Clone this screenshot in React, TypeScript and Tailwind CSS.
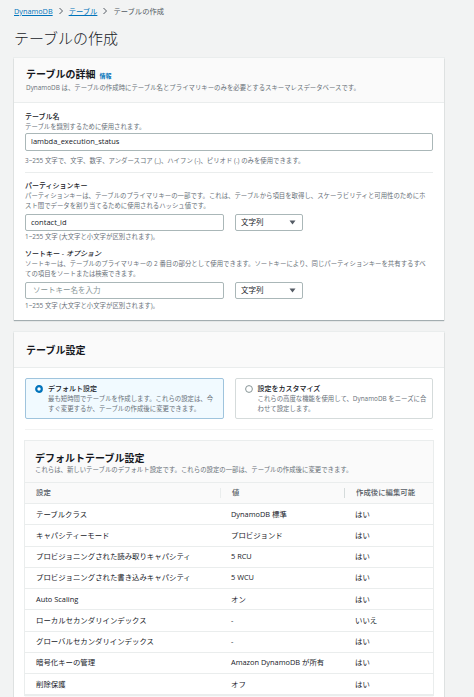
import React from 'react';

const FONT = "[font-family:'Open_Sans','Noto_Sans_CJK_JP',sans-serif]";

function Chevron() {
  return (
    <svg width="8" height="8" viewBox="0 0 8 8" className="mx-[4px]">
      <path d="M2.5 1 L5.5 4 L2.5 7" fill="none" stroke="#545b64" strokeWidth="1" />
    </svg>
  );
}

function Caret() {
  return (
    <svg width="7" height="5" viewBox="0 0 7 5">
      <path d="M0.5 0.5 L6.5 0.5 L3.5 4.5 Z" fill="#545b64" />
    </svg>
  );
}

function Select() {
  return (
    <div className="w-[68px] h-full border border-[#aab7b8] rounded-[2px] bg-white flex items-center justify-between pl-[5px] pr-[6px] text-[7.5px] text-[#16191f]">
      <span>文字列</span>
      <Caret />
    </div>
  );
}

const rows: [string, string, string][] = [
  ['テーブルクラス', 'DynamoDB 標準', 'はい'],
  ['キャパシティーモード', 'プロビジョンド', 'はい'],
  ['プロビジョニングされた読み取りキャパシティ', '5 RCU', 'はい'],
  ['プロビジョニングされた書き込みキャパシティ', '5 WCU', 'はい'],
  ['Auto Scaling', 'オン', 'はい'],
  ['ローカルセカンダリインデックス', '-', 'いいえ'],
  ['グローバルセカンダリインデックス', '-', 'はい'],
  ['暗号化キーの管理', 'Amazon DynamoDB が所有', 'はい'],
  ['削除保護', 'オフ', 'はい'],
];

export default function App() {
  return (
    <div className={`${FONT} min-h-[697px] bg-[#f2f3f3] text-[#16191f] pl-[14px] pr-[30px]`}>
      {/* breadcrumb */}
      <div className="h-[21px] flex items-center text-[7.3px] pt-[1px]">
        <span className="text-[#0073bb] underline">DynamoDB</span>
        <Chevron />
        <span className="text-[#0073bb] underline">テーブル</span>
        <Chevron />
        <span className="text-[#545b64]">テーブルの作成</span>
      </div>
      <h1 className="h-[37px] flex items-center text-[15px] font-light pb-[2px]">テーブルの作成</h1>

      {/* card: table details */}
      <div className="bg-white shadow-[0_1px_1px_rgba(0,28,36,0.3),0_0_0_1px_#eaeded]">
        <div className="bg-[#fafafa] border-b border-[#eaeded] px-[12px] pt-[9px] pb-[9px]">
          <div className="flex items-baseline gap-[4px] leading-[14px]">
            <span className="text-[10px] font-bold">テーブルの詳細</span>
            <span className="text-[6px] font-bold text-[#0073bb]">情報</span>
          </div>
          <p className="text-[6.4px] leading-[10px] text-[#687078]">DynamoDB は、テーブルの作成時にテーブル名とプライマリキーのみを必要とするスキーマレスデータベースです。</p>
        </div>
        <div className="px-[11px] pt-[9px] pb-[9px]">
          <div className="text-[7px] font-medium leading-[10px]">テーブル名</div>
          <div className="text-[6.4px] leading-[10px] text-[#687078]">テーブルを識別するために使用されます。</div>
          <div className="mt-[1px] h-[18px] border border-[#aab7b8] rounded-[2px] flex items-center pl-[5px] text-[7.5px] font-medium">lambda_execution_status</div>
          <div className="mt-[5px] text-[6.4px] leading-[10px] text-[#687078]">3~255 文字で、文字、数字、アンダースコア (_)、ハイフン (-)、ピリオド (.) のみを使用できます。</div>
          <div className="mt-[6px] h-px bg-[#eaeded]" />

          <div className="mt-[8px] text-[7px] font-medium leading-[10px]">パーティションキー</div>
          <div className="text-[6.4px] leading-[10px] text-[#687078] whitespace-nowrap">
            <div>パーティションキーは、テーブルのプライマリキーの一部です。これは、テーブルから項目を取得し、スケーラビリティと可用性のためにホ</div>
            <div>スト間でデータを割り当てるために使用されるハッシュ値です。</div>
          </div>
          <div className="mt-[3px] h-[17px] flex gap-[11px]">
            <div className="w-[199px] h-full border border-[#aab7b8] rounded-[2px] flex items-center pl-[5px] text-[7.5px] font-medium">contact_id</div>
            <Select />
          </div>
          <div className="mt-[1px] text-[6.4px] leading-[10px] text-[#687078]">1~255 文字 (大文字と小文字が区別されます)。</div>

          <div className="mt-[7px] text-[7px] font-medium leading-[10px]">ソートキー - <i>オプション</i></div>
          <div className="text-[6.4px] leading-[10px] text-[#687078] whitespace-nowrap">
            <div>ソートキーは、テーブルのプライマリキーの 2 番目の部分として使用できます。ソートキーにより、同じパーティションキーを共有するすべ</div>
            <div>ての項目をソートまたは検索できます。</div>
          </div>
          <div className="mt-[3px] h-[17px] flex gap-[11px]">
            <div className="w-[199px] h-full border border-[#aab7b8] rounded-[2px] flex items-center pl-[7px] text-[7.5px] text-[#879596]">ソートキー名を入力</div>
            <Select />
          </div>
          <div className="mt-[2px] text-[6.4px] leading-[10px] text-[#687078]">1~255 文字 (大文字と小文字が区別されます)。</div>
        </div>
      </div>

      {/* card: table settings */}
      <div className="mt-[12px] bg-white shadow-[0_1px_1px_rgba(0,28,36,0.3),0_0_0_1px_#eaeded]">
        <div className="bg-[#fafafa] border-b border-[#eaeded] px-[12px] pt-[9px] pb-[10px] leading-[14px]">
          <span className="text-[10px] font-bold">テーブル設定</span>
        </div>
        <div className="px-[11px] pt-[10px]">
          <div className="flex gap-[11px]">
            <div className="flex-1 h-[41px] border border-[#9fc4dd] bg-[#f1faff] rounded-[2px] flex pl-[9px] pt-[5px] gap-[5px]">
              <svg width="8" height="8" viewBox="0 0 8 8" className="mt-[1px] shrink-0">
                <circle cx="4" cy="4" r="2.8" fill="#fff" stroke="#0073bb" strokeWidth="2.2" />
              </svg>
              <div>
                <div className="text-[7px] font-medium leading-[10px]">デフォルト設定</div>
                <div className="text-[6.4px] leading-[10px] text-[#687078] whitespace-nowrap">
                  <div>最も短時間でテーブルを作成します。これらの設定は、今</div>
                  <div>すぐ変更するか、テーブルの作成後に変更できます。</div>
                </div>
              </div>
            </div>
            <div className="flex-1 h-[41px] border border-[#d5dbdb] bg-white rounded-[2px] flex pl-[9px] pt-[5px] gap-[5px]">
              <svg width="8" height="8" viewBox="0 0 8 8" className="mt-[1px] shrink-0">
                <circle cx="4" cy="4" r="3.4" fill="#fff" stroke="#879596" strokeWidth="1" />
              </svg>
              <div>
                <div className="text-[7px] font-medium leading-[10px]">設定をカスタマイズ</div>
                <div className="text-[6.4px] leading-[10px] text-[#687078] whitespace-nowrap">
                  <div>これらの高度な機能を使用して、DynamoDB をニーズに合</div>
                  <div>わせて設定します。</div>
                </div>
              </div>
            </div>
          </div>
          <div className="mt-[10px] h-px bg-[#f2f3f3]" />

          <div className="mt-[11px] bg-white shadow-[0_0_0_1px_#eaeded,0_1px_1px_rgba(0,28,36,0.15)]">
            <div className="bg-[#fafafa] px-[10px] pt-[10px] pb-[7px]">
              <div className="text-[10px] font-bold leading-[14px]">デフォルトテーブル設定</div>
              <div className="text-[6.4px] leading-[10px] text-[#687078]">これらは、新しいテーブルのデフォルト設定です。これらの設定の一部は、テーブルの作成後に変更できます。</div>
            </div>
            <div className="grid grid-cols-[195px_124px_1fr] h-[22px] items-center bg-[#fafafa] border-y border-[#eaeded] text-[7.4px] font-medium text-[#545b64]">
              <div className="pl-[11px]">設定</div>
              <div className="pl-[11px] border-l border-[#eaeded] h-[10px] flex items-center">値</div>
              <div className="pl-[11px] border-l border-[#d5dbdb] h-[10px] flex items-center">作成後に編集可能</div>
            </div>
            {rows.map((r, i) => (
              <div key={i} className="grid grid-cols-[195px_124px_1fr] h-[21.25px] items-center border-b border-[#eaeded] text-[7.4px]">
                <div className="pl-[11px] whitespace-nowrap">{r[0]}</div>
                <div className="pl-[11px] whitespace-nowrap">{r[1]}</div>
                <div className="pl-[11px]">{r[2]}</div>
              </div>
            ))}
          </div>
          <div className="h-[11px]" />
        </div>
      </div>
      <div className="h-[20px]" />
    </div>
  );
}
